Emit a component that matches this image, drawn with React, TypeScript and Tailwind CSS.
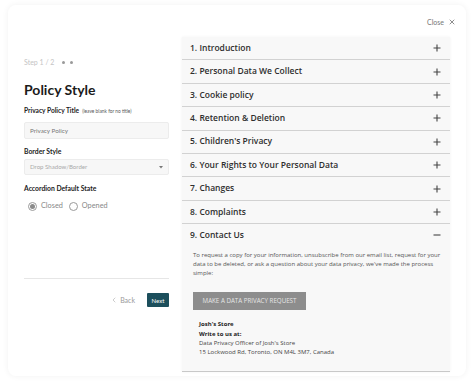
import { ChevronLeft, X } from "lucide-react";

const sections = [
  "1. Introduction",
  "2. Personal Data We Collect",
  "3. Cookie policy",
  "4. Retention & Deletion",
  "5. Children's Privacy",
  "6. Your Rights to Your Personal Data",
  "7. Changes",
  "8. Complaints",
];

function PlusIcon() {
  return (
    <svg width="8" height="8" viewBox="0 0 8 8" className="text-[#444]">
      <path d="M4 0.5v7M0.5 4h7" stroke="currentColor" strokeWidth="1.1" />
    </svg>
  );
}

function Radio({ label, checked }: { label: string; checked?: boolean }) {
  return (
    <label className="flex items-center gap-[4px]">
      <span className="flex h-[9px] w-[9px] items-center justify-center rounded-full border border-[#9a9a9a] bg-white">
        {checked && <span className="h-[5px] w-[5px] rounded-full bg-[#8a8a8a]" />}
      </span>
      <span className="text-[7.3px] text-[#888]">{label}</span>
    </label>
  );
}

function SettingsColumn() {
  return (
    <div className="flex w-[145px] flex-col font-['Lato',sans-serif]">
      <div className="mt-[20px] flex h-[10px] items-center gap-[8px] text-[7px] text-[#c4c4c4]">
        <span>Step 1 / 2</span>
        <span className="flex gap-[5px]">
          <span className="h-[3px] w-[3px] rounded-full bg-[#9a9a9a]" />
          <span className="h-[3px] w-[3px] rounded-full bg-[#9a9a9a]" />
        </span>
      </div>
      <h1 className="mt-[14px] h-[18px] text-[14px] font-bold leading-[18px] text-[#1b1b1b]">Policy Style</h1>
      <div className="mt-[5.5px] flex h-[11px] items-baseline gap-[3px] leading-[11px]">
        <span className="text-[6.6px] font-bold text-[#222]">Privacy Policy Title</span>
        <span className="text-[4.8px] text-[#555]">(leave blank for no title)</span>
      </div>
      <div className="mt-[6.5px] flex h-[17px] items-center rounded-[2px] border border-[#ececec] bg-[#f7f7f7] px-[5px] text-[6.3px] text-[#777]">
        Privacy Policy
      </div>
      <div className="mt-[6.5px] h-[11px] text-[6.8px] font-bold leading-[11px] text-[#222]">Border Style</div>
      <div className="mt-[2.5px] flex h-[16px] items-center justify-between rounded-[2px] border border-[#ececec] bg-[#f7f7f7] px-[5px] text-[6.1px] text-[#aaa]">
        <span>Drop Shadow/Border</span>
        <svg width="4" height="3" viewBox="0 0 4 3">
          <path d="M0 0h4L2 2.5z" fill="#777" />
        </svg>
      </div>
      <div className="mt-[7.5px] h-[11px] text-[6.8px] font-bold leading-[11px] text-[#222]">Accordion Default State</div>
      <div className="mt-[6.5px] flex h-[12px] items-center gap-[6px] pl-[4px]">
        <Radio label="Closed" checked />
        <Radio label="Opened" />
      </div>
      <div className="mt-[66px] h-px bg-[#e6e6e6]" />
      <div className="mt-[14px] flex items-center justify-end gap-[12px]">
        <button className="flex items-center gap-[2px] text-[7px] text-[#9a9a9a]">
          <ChevronLeft size={8} strokeWidth={1.5} />
          Back
        </button>
        <button className="h-[14px] w-[22px] rounded-[1px] bg-[#1c4f5c] text-[6px] text-white">Next</button>
      </div>
    </div>
  );
}

function AccordionRow({ title }: { title: string }) {
  return (
    <div className="flex h-[23.4px] items-center justify-between border-b border-[#d2d2d2] bg-[#f8f8f8] pl-[8px] pr-[9px] shadow-[0_1px_1px_rgba(0,0,0,0.04)]">
      <span className="text-[8.5px] font-semibold text-[#2e2e2e]">{title}</span>
      <PlusIcon />
    </div>
  );
}

function PolicyPreview() {
  return (
    <div className="flex w-[268px] flex-col font-['Open_Sans',sans-serif] shadow-[0_0_3px_rgba(0,0,0,0.05)]">
      {sections.map((s) => (
        <AccordionRow key={s} title={s} />
      ))}
      <div className="border-b border-[#c8c8c8] bg-[#f8f8f8]">
        <div className="flex h-[22.4px] items-center justify-between pl-[8px] pr-[9px]">
          <span className="text-[8.5px] font-semibold text-[#2e2e2e]">9. Contact Us</span>
          <svg width="8" height="8" viewBox="0 0 8 8">
            <path d="M0.5 4h7" stroke="#444" strokeWidth="1.1" />
          </svg>
        </div>
        <div className="pl-[11px] pr-[6px] pt-[4px] pb-[14px]">
          <p className="text-[6px] leading-[9px] text-[#555]">
            To request a copy for your information, unsubscribe from our email list, request for your data to be
            deleted, or ask a question about your data privacy, we've made the process simple:
          </p>
          <div className="mt-[14px] flex h-[18px] w-[113px] items-center justify-center bg-[#8d8d8d] text-[6.2px] text-[#e6e6e6]">
            MAKE A DATA PRIVACY REQUEST
          </div>
          <div className="mt-[10px] pl-[6px] text-[6px] leading-[9px] text-[#444]">
            <div className="font-bold text-[#222]">Josh's Store</div>
            <div className="mt-[1.5px] font-bold text-[#222]">Write to us at:</div>
            <div>Data Privacy Officer of Josh's Store</div>
            <div>15 Lockwood Rd, Toronto, ON M4L 3M7, Canada</div>
          </div>
        </div>
      </div>
    </div>
  );
}

export default function App() {
  return (
    <div className="h-[381px] w-[474px] bg-white pl-[8px] pt-[5px]">
      <div className="h-[371px] w-[458px] rounded-[8px] bg-white shadow-[0_0_6px_rgba(0,0,0,0.06)]">
        <div className="flex h-[32px] items-start justify-end gap-[4px] pr-[10px] pt-[12px] font-['Lato',sans-serif] text-[7px] text-[#777]">
          <span>Close</span>
          <X size={8} strokeWidth={2} className="mt-[1px] text-[#555]" />
        </div>
        <div className="flex gap-[13px] pl-[16px]">
          <SettingsColumn />
          <PolicyPreview />
        </div>
      </div>
    </div>
  );
}
